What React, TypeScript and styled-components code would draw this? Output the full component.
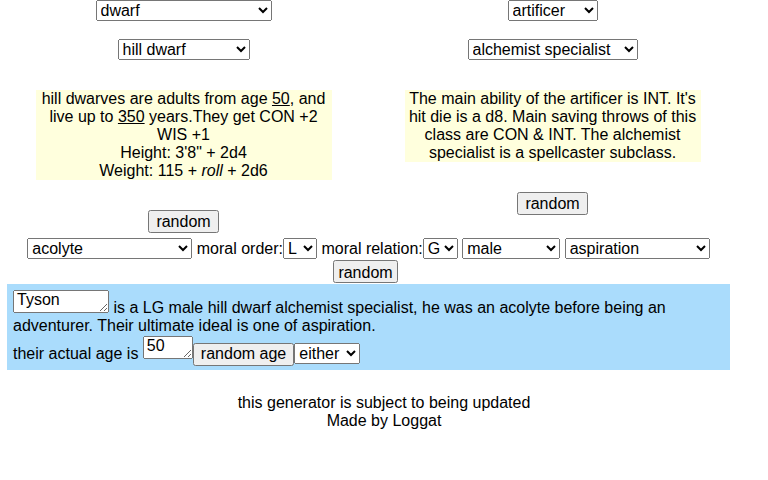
import styled, { createGlobalStyle } from "styled-components";

const GlobalStyle = createGlobalStyle`
  body {
    margin: 0;
    background: #ffffff;
    color: #000000;
    font-family: "Liberation Sans", Arial, sans-serif;
    font-size: 16px;
  }
`;

export default function App() {
  return (
    <Page>
      <GlobalStyle />
      <Columns>
        <Column>
          <Picker $w={176}>
            <option>dwarf</option>
            <option>elf</option>
            <option>human</option>
          </Picker>
          <Picker $w={132} $top={18}>
            <option>hill dwarf</option>
            <option>mountain dwarf</option>
          </Picker>
          <InfoBox>
            hill dwarves are adults from age <u>50</u>, and live up to <u>350</u>{" "}
            years.They get CON +2 WIS +1
            <br />
            Height: 3'8" + 2d4
            <br />
            Weight: 115 + <i>roll</i> + 2d6
          </InfoBox>
          <RandomButton>random</RandomButton>
        </Column>
        <Column>
          <Picker $w={90}>
            <option>artificer</option>
            <option>bard</option>
          </Picker>
          <Picker $w={170} $top={18}>
            <option>alchemist specialist</option>
            <option>artillerist</option>
          </Picker>
          <InfoBox>
            The main ability of the artificer is INT. It's hit die is a d8. Main saving
            throws of this class are CON &amp; INT. The alchemist specialist is a
            spellcaster subclass.
          </InfoBox>
          <RandomButton>random</RandomButton>
        </Column>
      </Columns>

      <Controls>
        <ControlRow>
          <Picker $w={165}>
            <option>acolyte</option>
            <option>charlatan</option>
          </Picker>{" "}
          moral order:
          <Picker $w={34}>
            <option>L</option>
            <option>N</option>
            <option>C</option>
          </Picker>{" "}
          moral relation:
          <Picker $w={35}>
            <option>G</option>
            <option>N</option>
            <option>E</option>
          </Picker>{" "}
          <Picker $w={98}>
            <option>male</option>
            <option>female</option>
          </Picker>{" "}
          <Picker $w={145}>
            <option>aspiration</option>
            <option>tradition</option>
          </Picker>
        </ControlRow>
        <ControlRow $shift={-6}>
          <SmallButton>random</SmallButton>
        </ControlRow>
      </Controls>

      <Story>
        <div>
          <NameField $w={96} defaultValue="Tyson" rows={1} /> is a LG male hill dwarf
          alchemist specialist, he was an acolyte before being an adventurer. Their
          ultimate ideal is one of aspiration.
        </div>
        <AgeLine>
          their actual age is <NameField $w={50} defaultValue="50" rows={1} />
          <button>random age</button>
          <Picker $w={66}>
            <option>either</option>
            <option>younger</option>
            <option>older</option>
          </Picker>
        </AgeLine>
      </Story>

      <Footer>
        this generator is subject to being updated
        <br />
        Made by Loggat
      </Footer>
    </Page>
  );
}

const Page = styled.div`
  width: 768px;

  button {
    font: inherit;
    height: 23px;
    padding: 0 6px;
  }
`;

const Columns = styled.div`
  display: grid;
  grid-template-columns: 367px 371px;
  align-items: start;
`;

const Column = styled.div`
  display: flex;
  flex-direction: column;
  align-items: center;
`;

const Picker = styled.select<{ $w: number; $top?: number }>`
  width: ${(p) => p.$w}px;
  height: 21px;
  margin-top: ${(p) => p.$top ?? 0}px;
  font: inherit;
  color: #000;
  padding: 0;
  vertical-align: baseline;
`;

const InfoBox = styled.div`
  width: 296px;
  margin-top: 30px;
  background: #ffffdd;
  text-align: center;
`;

const RandomButton = styled.button`
  margin-top: 30px;
`;

const SmallButton = styled.button`
  && {
    padding: 0 3px;
  }
`;

const Controls = styled.div`
  width: 737px;
  margin-top: 5px;
`;

const ControlRow = styled.div<{ $shift?: number }>`
  text-align: center;
  margin-left: ${(p) => p.$shift ?? 0}px;
  line-height: 22px;
`;

const Story = styled.div`
  width: 723px;
  box-sizing: border-box;
  margin: 0 0 0 7px;
  padding: 6px 6px 4px;
  background: #aadcfc;
`;

const AgeLine = styled.div`
  margin-top: 1px;
`;

const NameField = styled.textarea<{ $w: number }>`
  width: ${(p) => p.$w}px;
  height: 23px;
  box-sizing: border-box;
  font: inherit;
  padding: 0 3px;
  line-height: 18px;
  vertical-align: baseline;
`;

const Footer = styled.div`
  margin-top: 24px;
  text-align: center;
`;
